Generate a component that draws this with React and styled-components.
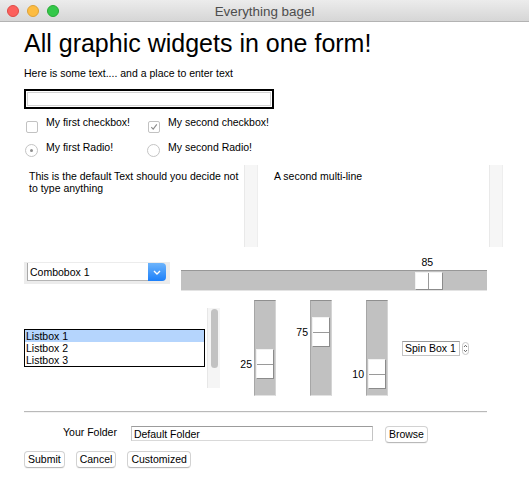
import React from 'react';
import styled, { createGlobalStyle } from 'styled-components';

const FONT = `"Liberation Sans", Arial, Helvetica, sans-serif`;

const GlobalStyle = createGlobalStyle`
  html, body {
    margin: 0;
    padding: 0;
    background: #fff;
  }
  body {
    font-family: ${FONT};
    color: #000;
  }
  * {
    box-sizing: border-box;
  }
`;

// window chrome
const Window = styled.div`
  width: 529px;
  height: 477px;
  background: #fff;
  overflow: hidden;
  display: flex;
  flex-direction: column;
`;

const TitleBar = styled.div`
  flex: none;
  height: 22px;
  display: grid;
  grid-template-columns: 1fr auto 1fr;
  align-items: center;
  background: linear-gradient(#ececec, #d6d6d6);
  border-bottom: 1px solid #b3b3b3;
`;

const Lights = styled.div`
  display: flex;
  gap: 8px;
  padding-left: 7px;
`;

const Light = styled.span`
  width: 12px;
  height: 12px;
  border-radius: 50%;
  background: ${({ $c }) => $c};
  border: 0.5px solid ${({ $b }) => $b};
`;

const WindowTitle = styled.div`
  font-size: 13.4px;
  color: #4d4d4d;
  padding-top: 1px;
`;

const Body = styled.div`
  display: flex;
  flex-direction: column;
  padding-left: 24px;
`;

const Heading = styled.h1`
  margin: 0;
  height: 40px;
  font-size: 25px;
  line-height: 42px;
  font-weight: 400;
`;

const Caption = styled.div`
  margin-top: 2px;
  height: 18px;
  font-size: 10.5px;
  line-height: 18px;
`;

const Entry = styled.input`
  margin-top: 7px;
  width: 250px;
  height: 20px;
  border: 2px solid #000;
  box-shadow: inset 0 0 0 1px #fff, inset 0 0 0 2px #d2d2d2;
  padding: 0 4px;
  outline: none;
  font-family: ${FONT};
  font-size: 10.5px;
`;

// checkboxes & radios
const OptionRow = styled.div`
  margin-top: 5px;
  height: 20px;
  display: grid;
  grid-template-columns: 122px auto;
`;

const Option = styled.label`
  display: flex;
  align-items: flex-start;
  gap: 8px;
  font-size: 10.5px;
  line-height: 16px;
`;

const CheckBox = styled.span`
  width: 12px;
  height: 12px;
  margin: 7px 0 0 2px;
  border: 1px solid #c2c2c2;
  border-radius: 2px;
  background: #fff;
  display: flex;
  align-items: center;
  justify-content: center;
`;

const RadioDot = styled.span`
  width: 13px;
  height: 13px;
  margin: 5px 0 0 1px;
  border: 1px solid #c4c4c4;
  border-radius: 50%;
  background: #fff;
  display: flex;
  align-items: center;
  justify-content: center;

  &::after {
    content: '';
    width: 3px;
    height: 3px;
    border-radius: 50%;
    background: ${({ $on }) => ($on ? '#8e8e8e' : 'transparent')};
  }
`;

// text panes
const PaneRow = styled.div`
  margin-top: 6px;
  height: 82px;
  display: flex;
  gap: 11px;
`;

const Pane = styled.div`
  display: flex;
`;

const TextArea = styled.textarea`
  width: 220px;
  height: 82px;
  padding: 5px 2px 0 5px;
  border: none;
  outline: none;
  resize: none;
  overflow: hidden;
  background: #fff;
  font-family: ${FONT};
  font-size: 10.5px;
  line-height: 12px;
  color: #000;
`;

const EmptyTrack = styled.div`
  width: 14px;
  height: 82px;
  background: #f6f6f6;
  box-shadow: inset 1px 0 #e9e9e9, inset -1px 0 #eeeeee;
`;

// combobox + horizontal scale
const ComboRow = styled.div`
  margin-top: 8px;
  height: 37px;
  display: flex;
  align-items: flex-start;
  gap: 11px;
`;

const ComboFrame = styled.div`
  margin-top: 7px;
  width: 146px;
  height: 22px;
  padding: 1px 4px 3px 3px;
  background: #ececec;
  display: flex;
`;

const ComboField = styled.div`
  width: 121px;
  height: 18px;
  background: #fff;
  border-left: 1px solid #a9a9a9;
  border-bottom: 1px solid #b4b4b4;
  padding-left: 2px;
  font-size: 10.5px;
  line-height: 18px;
`;

const ComboButton = styled.div`
  width: 18px;
  height: 18px;
  border-radius: 0 4px 4px 0;
  background: linear-gradient(#6db4fb, #1b7ffa);
  display: flex;
  align-items: center;
  justify-content: center;
`;

const HScaleWrap = styled.div`
  position: relative;
  width: 306px;
  padding-top: 15px;
`;

const HValue = styled.span`
  position: absolute;
  top: 0;
  transform: translateX(-50%);
  font-size: 10.5px;
  line-height: 15px;
`;

const HTrough = styled.div`
  position: relative;
  height: 21px;
  background: #c1c1c1;
  border-top: 1px solid #979797;
  border-bottom: 1px solid #e3e3e3;
`;

const HThumb = styled.div`
  position: absolute;
  top: 1px;
  width: 28px;
  height: 18px;
  background: #fff;
  border-top: 1px solid #f2f2f2;
  border-left: 1px solid #f2f2f2;
  border-right: 1px solid #8b8b8b;
  border-bottom: 1px solid #8b8b8b;

  &::after {
    content: '';
    position: absolute;
    top: 0;
    bottom: 0;
    left: 12px;
    width: 1px;
    background: #9a9a9a;
  }
`;

// listbox + vertical scales
const ListRow = styled.div`
  margin-top: 8px;
  height: 96px;
  display: flex;
  align-items: center;
`;

const ListBox = styled.div`
  width: 181px;
  border: 1px solid #000;
  background: #fff;
`;

const ListItem = styled.div`
  height: 12px;
  padding-left: 1px;
  font-size: 10.5px;
  line-height: 12px;
  background: ${({ $selected }) => ($selected ? '#b5d5fd' : 'transparent')};
`;

const ListScroll = styled.div`
  margin-left: 2px;
  width: 13px;
  height: 80px;
  padding: 1px 0 0 4px;
  background: #f5f5f5;
  box-shadow: inset 1px 0 #e7e7e7;
`;

const ListScrollThumb = styled.div`
  width: 7px;
  height: 59px;
  border-radius: 4px;
  background: #c2c2c2;
`;

const VScaleWrap = styled.div`
  display: flex;
  width: 56px;
  height: 96px;
`;

const VLabelCol = styled.div`
  position: relative;
  width: 34px;
`;

const VValue = styled.span`
  position: absolute;
  right: 2px;
  transform: translateY(-50%);
  font-size: 10.5px;
  line-height: 12px;
`;

const VTrough = styled.div`
  position: relative;
  width: 22px;
  height: 96px;
  background: #c1c1c1;
  border-top: 1px solid #8f8f8f;
  border-left: 1px solid #a6a6a6;
  border-right: 1px solid #d4d4d4;
  border-bottom: 1px solid #e2e2e2;
`;

const VThumb = styled.div`
  position: absolute;
  left: 1px;
  width: 18px;
  height: 30px;
  background: #fff;
  border-top: 1px solid #f2f2f2;
  border-left: 1px solid #f2f2f2;
  border-right: 1px solid #8b8b8b;
  border-bottom: 1px solid #8b8b8b;

  &::after {
    content: '';
    position: absolute;
    left: 0;
    right: 0;
    top: 14px;
    height: 1px;
    background: #9a9a9a;
  }
`;

const SpinBox = styled.div`
  margin-left: 14px;
  display: flex;
  align-items: center;
  gap: 2px;
`;

const SpinField = styled.div`
  width: 58px;
  height: 15px;
  border: 1px solid #c4c4c4;
  border-top-color: #9a9a9a;
  padding-left: 2px;
  font-size: 10.5px;
  line-height: 13px;
`;

// bottom part
const Separator = styled.div`
  margin-top: 15px;
  width: 463px;
  border-top: 1px solid #b9b9b9;
  border-bottom: 1px solid #f3f3f3;
`;

const FolderRow = styled.div`
  margin-top: 13px;
  height: 17px;
  display: flex;
  align-items: flex-start;
`;

const FolderLabel = styled.span`
  padding-left: 39px;
  margin-right: 14px;
  font-size: 10.5px;
  line-height: 12px;
`;

const FolderInput = styled.input`
  width: 242px;
  height: 15px;
  margin-right: 12px;
  padding: 0 2px;
  border: 1px solid #c4c4c4;
  border-top-color: #9c9c9c;
  border-bottom-color: #d9d9d9;
  outline: none;
  font-family: ${FONT};
  font-size: 10.5px;
  color: #000;
`;

const ButtonRow = styled.div`
  margin-top: 8px;
  display: flex;
  gap: 11px;
`;

const Button = styled.button`
  height: 17px;
  padding: 0 3px;
  background: #fff;
  border: 1px solid #d2d2d2;
  border-bottom-color: #b9b9b9;
  border-radius: 4px;
  box-shadow: 0 1px 0 rgba(0, 0, 0, 0.04);
  font-family: ${FONT};
  font-size: 10.5px;
  line-height: 15px;
  color: #000;
`;

function Check() {
  return (
    <svg width="8" height="8" viewBox="0 0 8 8">
      <path d="M1.3 4.2 L3.2 6.2 L6.8 1.4" fill="none" stroke="#8a8a8a" strokeWidth="1.1" />
    </svg>
  );
}

function HScale({ value }) {
  const left = (value / 100) * (306 - 28);
  return (
    <HScaleWrap>
      <HValue style={{ left: left + 10 }}>{value}</HValue>
      <HTrough>
        <HThumb style={{ left: left - 2 }} />
      </HTrough>
    </HScaleWrap>
  );
}

function VScale({ value }) {
  // top of the trough is 100, bottom is 0
  const top = (1 - value / 100) * (94 - 30);
  return (
    <VScaleWrap>
      <VLabelCol>
        <VValue style={{ top: top + 16 }}>{value}</VValue>
      </VLabelCol>
      <VTrough>
        <VThumb style={{ top }} />
      </VTrough>
    </VScaleWrap>
  );
}

export default function App() {
  return (
    <Window>
      <GlobalStyle />
      <TitleBar>
        <Lights>
          <Light $c="#fc605c" $b="#de4b46" />
          <Light $c="#fdbc40" $b="#dea236" />
          <Light $c="#34c84a" $b="#27aa35" />
        </Lights>
        <WindowTitle>Everything bagel</WindowTitle>
        <span />
      </TitleBar>

      <Body>
        <Heading>All graphic widgets in one form!</Heading>
        <Caption>Here is some text.... and a place to enter text</Caption>
        <Entry />

        <OptionRow>
          <Option>
            <CheckBox />
            My first checkbox!
          </Option>
          <Option>
            <CheckBox>
              <Check />
            </CheckBox>
            My second checkbox!
          </Option>
        </OptionRow>
        <OptionRow>
          <Option>
            <RadioDot $on />
            My first Radio!
          </Option>
          <Option>
            <RadioDot />
            My second Radio!
          </Option>
        </OptionRow>

        <PaneRow>
          <Pane>
            <TextArea
              spellCheck={false}
              defaultValue="This is the default Text should you decide not to type anything"
            />
            <EmptyTrack />
          </Pane>
          <Pane>
            <TextArea spellCheck={false} defaultValue="A second multi-line" />
            <EmptyTrack />
          </Pane>
        </PaneRow>

        <ComboRow>
          <ComboFrame>
            <ComboField>Combobox 1</ComboField>
            <ComboButton>
              <svg width="8" height="5" viewBox="0 0 8 5">
                <path d="M1 1 L4 4 L7 1" fill="none" stroke="#fff" strokeWidth="1.4" />
              </svg>
            </ComboButton>
          </ComboFrame>
          <HScale value={85} />
        </ComboRow>

        <ListRow>
          <ListBox>
            <ListItem $selected>Listbox 1</ListItem>
            <ListItem>Listbox 2</ListItem>
            <ListItem>Listbox 3</ListItem>
          </ListBox>
          <ListScroll>
            <ListScrollThumb />
          </ListScroll>
          <VScale value={25} />
          <VScale value={75} />
          <VScale value={10} />
          <SpinBox>
            <SpinField>Spin Box 1</SpinField>
            <svg width="7" height="13" viewBox="0 0 7 13">
              <rect x="0.5" y="0.5" width="6" height="12" rx="3" fill="#fff" stroke="#c6c6c6" />
              <path d="M2 5 L3.5 3.3 L5 5" fill="none" stroke="#555" strokeWidth="0.9" />
              <path d="M2 8 L3.5 9.7 L5 8" fill="none" stroke="#555" strokeWidth="0.9" />
            </svg>
          </SpinBox>
        </ListRow>

        <Separator />

        <FolderRow>
          <FolderLabel>Your Folder</FolderLabel>
          <FolderInput defaultValue="Default Folder" spellCheck={false} />
          <Button>Browse</Button>
        </FolderRow>

        <ButtonRow>
          <Button>Submit</Button>
          <Button>Cancel</Button>
          <Button>Customized</Button>
        </ButtonRow>
      </Body>
    </Window>
  );
}
